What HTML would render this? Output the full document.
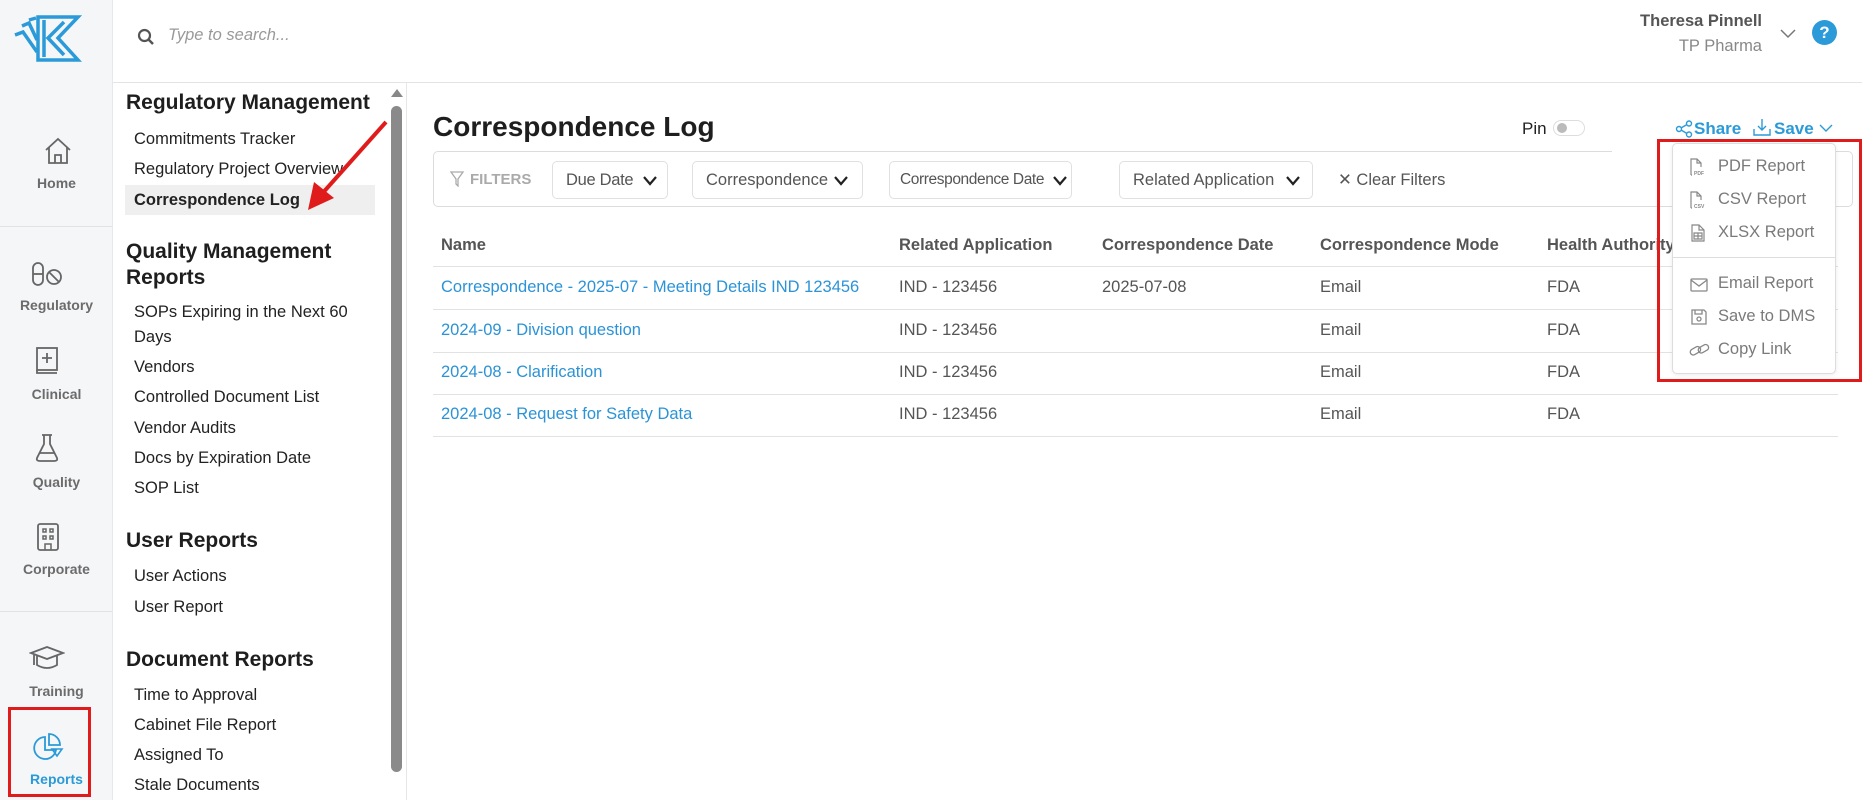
<!DOCTYPE html>
<html><head><meta charset="utf-8"><style>
*{margin:0;padding:0;box-sizing:border-box}
body{width:1862px;height:800px;overflow:hidden;background:#fff;font-family:"Liberation Sans",sans-serif;position:relative;color:#222}
.a{position:absolute;white-space:nowrap}
.rail{left:0;top:0;width:113px;height:800px;background:#f5f6f8;border-right:1px solid #e6e8eb}
.rl{width:113px;text-align:center;font-size:14px;font-weight:bold;color:#6b6b6b;left:0}
.sub{left:113px;top:82px;width:294px;height:718px;border-right:1px solid #e6e6e6}
.h{font-size:21px;font-weight:bold;color:#1e1e1e;left:126px}
.it{font-size:16.5px;color:#222;left:134px}
.th{font-size:16.5px;font-weight:bold;color:#555}
.td{font-size:16.5px;color:#555}
.lk{font-size:16.5px;color:#2b93d6}
.ln{height:1px;background:#e2e2e2;left:433px;width:1405px}
.fb{top:161px;height:38px;border:1px solid #e0e0e0;border-radius:5px;font-size:16.5px;color:#555;padding:9px 0 0 13px}
.fb svg{position:absolute;top:14px}
.mi{left:1718px;font-size:16.5px;color:#7a7a7a}
.ic{left:1689px}
</style></head><body>
<div class="a rail"></div>
<svg class="a" style="left:0;top:0" width="100" height="80" viewBox="0 0 100 80"><g fill="none" stroke="#2a9ad8" stroke-width="3.5" stroke-linejoin="miter"><path d="M38 17 H78 L58 38 L78 60 H38 Z"/><path d="M44 20 V57"/><path d="M64 22 L48 38 L64 55"/><path d="M15 35 L23 32 L37 52"/><path d="M22 26 L29 23 L37 40"/><path d="M29 20 L36 18"/></g></svg>
<div class="a" style="left:113px;top:82px;width:1749px;height:1px;background:#e4e4e4"></div>
<svg class="a" style="left:137px;top:28px" width="18" height="18" viewBox="0 0 18 18"><circle cx="7.5" cy="7.5" r="5.5" fill="none" stroke="#555" stroke-width="2.2"/><path d="M11.5 11.5 L16 16" stroke="#555" stroke-width="2.5"/></svg>
<div class="a" style="left:168px;top:26px;font-size:16.5px;font-style:italic;color:#999">Type to search...</div>
<div class="a" style="right:100px;top:12px;font-size:16.5px;font-weight:bold;color:#555">Theresa Pinnell</div>
<div class="a" style="right:100px;top:37px;font-size:16.5px;color:#888">TP Pharma</div>
<svg class="a" style="left:1780px;top:29px" width="16" height="10"><path d="M1 1 L8 8 L15 1" fill="none" stroke="#777" stroke-width="1.5"/></svg>
<div class="a" style="left:1812px;top:20px;width:25px;height:25px;border-radius:50%;background:#2a9ad8;color:#fff;font-weight:bold;font-size:17px;text-align:center;line-height:25px">?</div>

<svg class="a" style="left:43px;top:136px" width="30" height="30" viewBox="0 0 30 30"><path d="M3 14 L15 3 L27 14 M6 11 V27 H24 V11 M12 27 V19 H18 V27" fill="none" stroke="#666" stroke-width="1.8"/></svg>
<div class="a rl" style="top:175px">Home</div>
<div class="a" style="left:0;top:226px;width:112px;height:1px;background:#e0e2e5"></div>
<svg class="a" style="left:30px;top:261px" width="34" height="26" viewBox="0 0 34 26"><rect x="3" y="2" width="10" height="22" rx="5" fill="none" stroke="#666" stroke-width="1.8"/><path d="M3 13 H13" stroke="#666" stroke-width="1.8"/><circle cx="24" cy="16" r="7" fill="none" stroke="#666" stroke-width="1.8"/><path d="M19 11 L29 21" stroke="#666" stroke-width="1.8"/></svg>
<div class="a rl" style="top:297px">Regulatory</div>
<svg class="a" style="left:33px;top:346px" width="28" height="30" viewBox="0 0 28 30"><rect x="4" y="2" width="20" height="22" fill="none" stroke="#666" stroke-width="1.8"/><path d="M4 24 V27 H24 M14 7 V17 M9 12 H19" fill="none" stroke="#666" stroke-width="1.8"/></svg>
<div class="a rl" style="top:386px">Clinical</div>
<svg class="a" style="left:34px;top:433px" width="26" height="30" viewBox="0 0 26 30"><path d="M8 2 H18 M10 2 V11 L3 25 Q2 28 6 28 H20 Q24 28 23 25 L16 11 V2 M6 20 H20" fill="none" stroke="#666" stroke-width="1.8"/></svg>
<div class="a rl" style="top:474px">Quality</div>
<svg class="a" style="left:36px;top:522px" width="24" height="30" viewBox="0 0 24 30"><rect x="2" y="2" width="20" height="26" rx="2" fill="none" stroke="#666" stroke-width="1.8"/><rect x="7" y="7" width="3" height="3" fill="none" stroke="#666" stroke-width="1.5"/><rect x="14" y="7" width="3" height="3" fill="none" stroke="#666" stroke-width="1.5"/><rect x="7" y="14" width="3" height="3" fill="none" stroke="#666" stroke-width="1.5"/><rect x="14" y="14" width="3" height="3" fill="none" stroke="#666" stroke-width="1.5"/><path d="M9 28 V22 H15 V28" fill="none" stroke="#666" stroke-width="1.5"/></svg>
<div class="a rl" style="top:561px">Corporate</div>
<div class="a" style="left:0;top:611px;width:112px;height:1px;background:#e0e2e5"></div>
<svg class="a" style="left:29px;top:645px" width="36" height="26" viewBox="0 0 36 26"><path d="M2 8 L18 2 L34 8 L18 14 Z M8 11 V20 Q18 26 28 20 V11 M5 10 V20" fill="none" stroke="#666" stroke-width="1.8"/></svg>
<div class="a rl" style="top:683px">Training</div>
<div class="a" style="left:8px;top:707px;width:83px;height:90px;border:3px solid #e01b1b"></div>
<svg class="a" style="left:32px;top:732px" width="32" height="30" viewBox="0 0 32 30"><path d="M13 5 A11 11 0 1 0 24 18 H13 Z" fill="none" stroke="#2a9ad8" stroke-width="1.8"/><path d="M17 2 A11 11 0 0 1 28 13 H17 Z" fill="none" stroke="#2a9ad8" stroke-width="1.8"/><path d="M20 17 H30 L25 24 Z" fill="none" stroke="#2a9ad8" stroke-width="1.6"/></svg>
<div class="a rl" style="top:771px;color:#2a9ad8">Reports</div>

<div class="a sub"></div>
<div class="a" style="left:391px;top:89px;width:0;height:0;border-left:6px solid transparent;border-right:6px solid transparent;border-bottom:8px solid #888"></div>
<div class="a" style="left:391px;top:106px;width:11px;height:666px;background:#8a8a8a;border-radius:6px"></div>
<div class="a h" style="top:91px">Regulatory Management</div>
<div class="a it" style="top:130px">Commitments Tracker</div>
<div class="a it" style="top:160px">Regulatory Project Overview</div>
<div class="a" style="left:125px;top:185px;width:250px;height:30px;background:#efefef"></div>
<div class="a it" style="top:191px;font-weight:bold">Correspondence Log</div>
<svg class="a" style="left:300px;top:118px" width="90" height="95" viewBox="0 0 90 95"><path d="M86 4 L20 78" stroke="#e01b1b" stroke-width="4"/><path d="M8 92 L14 64 L34 80 Z" fill="#e01b1b"/></svg>
<div class="a h" style="top:240px">Quality Management</div>
<div class="a h" style="top:266px">Reports</div>
<div class="a it" style="top:303px">SOPs Expiring in the Next 60</div>
<div class="a it" style="top:328px">Days</div>
<div class="a it" style="top:358px">Vendors</div>
<div class="a it" style="top:388px">Controlled Document List</div>
<div class="a it" style="top:419px">Vendor Audits</div>
<div class="a it" style="top:449px">Docs by Expiration Date</div>
<div class="a it" style="top:479px">SOP List</div>
<div class="a h" style="top:529px">User Reports</div>
<div class="a it" style="top:567px">User Actions</div>
<div class="a it" style="top:598px">User Report</div>
<div class="a h" style="top:648px">Document Reports</div>
<div class="a it" style="top:686px">Time to Approval</div>
<div class="a it" style="top:716px">Cabinet File Report</div>
<div class="a it" style="top:746px">Assigned To</div>
<div class="a it" style="top:776px">Stale Documents</div>

<div class="a" style="left:433px;top:111px;font-size:28px;font-weight:bold;color:#1e1e1e">Correspondence Log</div>
<div class="a" style="left:1522px;top:119px;font-size:17px;color:#222">Pin</div>
<div class="a" style="left:1553px;top:120px;width:32px;height:16px;border:1px solid #ddd;border-radius:8px"><div style="position:absolute;left:3px;top:2px;width:10px;height:10px;border-radius:50%;background:#bbb"></div></div>
<svg class="a" style="left:1675px;top:120px" width="18" height="18" viewBox="0 0 18 18"><g fill="none" stroke="#2a9ad8" stroke-width="1.4"><circle cx="4" cy="9" r="2.5"/><circle cx="14" cy="3.5" r="2.5"/><circle cx="14" cy="14.5" r="2.5"/><path d="M6 8 L12 4.5 M6 10 L12 13.5"/></g></svg>
<div class="a" style="left:1694px;top:119px;font-size:17px;font-weight:bold;color:#2a9ad8">Share</div>
<svg class="a" style="left:1752px;top:118px" width="20" height="20" viewBox="0 0 20 20"><g fill="none" stroke="#2a9ad8" stroke-width="1.4"><path d="M10 1 V12 M6 8 L10 12 L14 8 M2 11 V17 H18 V11"/></g></svg>
<div class="a" style="left:1774px;top:119px;font-size:17px;font-weight:bold;color:#2a9ad8">Save</div>
<svg class="a" style="left:1819px;top:124px" width="14" height="9"><path d="M1 1 L7 7 L13 1" fill="none" stroke="#2a9ad8" stroke-width="1.4"/></svg>

<div class="a" style="left:433px;top:151px;width:1420px;height:56px;border:1px solid #dcdcdc;border-radius:5px"></div>
<svg class="a" style="left:450px;top:171px" width="14" height="16" viewBox="0 0 14 16"><path d="M1 1 H13 L8 8 V15 L6 13 V8 Z" fill="none" stroke="#aaa" stroke-width="1.3"/></svg>
<div class="a" style="left:470px;top:171px;font-size:15px;font-weight:bold;color:#aaa">FILTERS</div>
<div class="a fb" style="left:552px;width:116px;letter-spacing:-0.3px">Due Date<svg style="right:10px" width="14" height="10"><path d="M1 1 L7 8 L13 1" fill="none" stroke="#222" stroke-width="2.2"/></svg></div>
<div class="a fb" style="left:692px;width:171px">Correspondence<svg style="right:14px" width="14" height="10"><path d="M1 1 L7 8 L13 1" fill="none" stroke="#222" stroke-width="2.2"/></svg></div>
<div class="a fb" style="left:889px;width:183px;font-size:15.5px;letter-spacing:-0.4px;padding-left:10px">Correspondence Date<svg style="right:4px" width="14" height="10"><path d="M1 1 L7 8 L13 1" fill="none" stroke="#222" stroke-width="2.2"/></svg></div>
<div class="a fb" style="left:1119px;width:194px">Related Application<svg style="right:12px" width="14" height="10"><path d="M1 1 L7 8 L13 1" fill="none" stroke="#222" stroke-width="2.2"/></svg></div>
<div class="a" style="left:1338px;top:170px;font-size:16.5px;color:#555">&#10005; Clear Filters</div>

<div class="a th" style="left:441px;top:236px">Name</div>
<div class="a th" style="left:899px;top:236px">Related Application</div>
<div class="a th" style="left:1102px;top:236px">Correspondence Date</div>
<div class="a th" style="left:1320px;top:236px">Correspondence Mode</div>
<div class="a th" style="left:1547px;top:236px">Health Authority</div>
<div class="a ln" style="top:266px"></div>
<div class="a lk" style="left:441px;top:278px">Correspondence - 2025-07 - Meeting Details IND 123456</div>
<div class="a td" style="left:899px;top:278px">IND - 123456</div>
<div class="a td" style="left:1102px;top:278px">2025-07-08</div>
<div class="a td" style="left:1320px;top:278px">Email</div>
<div class="a td" style="left:1547px;top:278px">FDA</div>
<div class="a ln" style="top:309px"></div>
<div class="a lk" style="left:441px;top:321px">2024-09 - Division question</div>
<div class="a td" style="left:899px;top:321px">IND - 123456</div>
<div class="a td" style="left:1320px;top:321px">Email</div>
<div class="a td" style="left:1547px;top:321px">FDA</div>
<div class="a ln" style="top:352px"></div>
<div class="a lk" style="left:441px;top:363px">2024-08 - Clarification</div>
<div class="a td" style="left:899px;top:363px">IND - 123456</div>
<div class="a td" style="left:1320px;top:363px">Email</div>
<div class="a td" style="left:1547px;top:363px">FDA</div>
<div class="a ln" style="top:394px"></div>
<div class="a lk" style="left:441px;top:405px">2024-08 - Request for Safety Data</div>
<div class="a td" style="left:899px;top:405px">IND - 123456</div>
<div class="a td" style="left:1320px;top:405px">Email</div>
<div class="a td" style="left:1547px;top:405px">FDA</div>
<div class="a ln" style="top:436px"></div>

<div class="a" style="left:1612px;top:145px;width:60px;height:10px;background:#fff"></div>
<div class="a" style="left:1672px;top:143px;width:164px;height:231px;background:#fff;border:1px solid #ddd;border-radius:5px;box-shadow:0 1px 4px rgba(0,0,0,.08)"></div>
<div class="a" style="left:1672px;top:257px;width:164px;height:1px;background:#ddd"></div>
<div class="a" style="left:1657px;top:139px;width:205px;height:243px;border:3px solid #e01b1b"></div>
<svg class="a ic" style="top:157px" width="20" height="20" viewBox="0 0 20 20"><path d="M2 18 V2 H8 L12 6 V10 M2 18 H3 M8 2 V6 H12" fill="none" stroke="#888" stroke-width="1.2"/><text x="5" y="18" font-size="5" font-family="Liberation Sans" font-weight="bold" fill="#888">PDF</text></svg>
<div class="a mi" style="top:157px">PDF Report</div>
<svg class="a ic" style="top:190px" width="20" height="20" viewBox="0 0 20 20"><path d="M2 18 V2 H8 L12 6 V10 M2 18 H3 M8 2 V6 H12" fill="none" stroke="#888" stroke-width="1.2"/><text x="5" y="18" font-size="5" font-family="Liberation Sans" font-weight="bold" fill="#888">CSV</text></svg>
<div class="a mi" style="top:190px">CSV Report</div>
<svg class="a ic" style="top:223px" width="20" height="20" viewBox="0 0 20 20"><path d="M3 18 V2 H10 L15 7 V18 Z M10 2 V7 H15 M5 10 H13 V16 H5 Z M5 13 H13 M9 10 V16" fill="none" stroke="#888" stroke-width="1.2"/></svg>
<div class="a mi" style="top:223px">XLSX Report</div>
<svg class="a ic" style="top:275px" width="20" height="20" viewBox="0 0 20 20"><rect x="2" y="4" width="16" height="12" rx="1" fill="none" stroke="#888" stroke-width="1.3"/><path d="M2 5 L10 11 L18 5" fill="none" stroke="#888" stroke-width="1.3"/></svg>
<div class="a mi" style="top:274px">Email Report</div>
<svg class="a ic" style="top:307px" width="20" height="20" viewBox="0 0 20 20"><path d="M3 3 H15 L17 5 V17 H3 Z M6 3 V7 H13 V3" fill="none" stroke="#888" stroke-width="1.3"/><circle cx="10" cy="12" r="2" fill="none" stroke="#888" stroke-width="1.3"/></svg>
<div class="a mi" style="top:307px">Save to DMS</div>
<svg class="a ic" style="top:340px" width="22" height="20" viewBox="0 0 22 20"><g fill="none" stroke="#888" stroke-width="1.3"><rect x="1" y="8" width="11" height="6" rx="3" transform="rotate(-30 6 11)"/><rect x="9" y="6" width="11" height="6" rx="3" transform="rotate(-30 14 9)"/></g></svg>
<div class="a mi" style="top:340px">Copy Link</div>
</body></html>
